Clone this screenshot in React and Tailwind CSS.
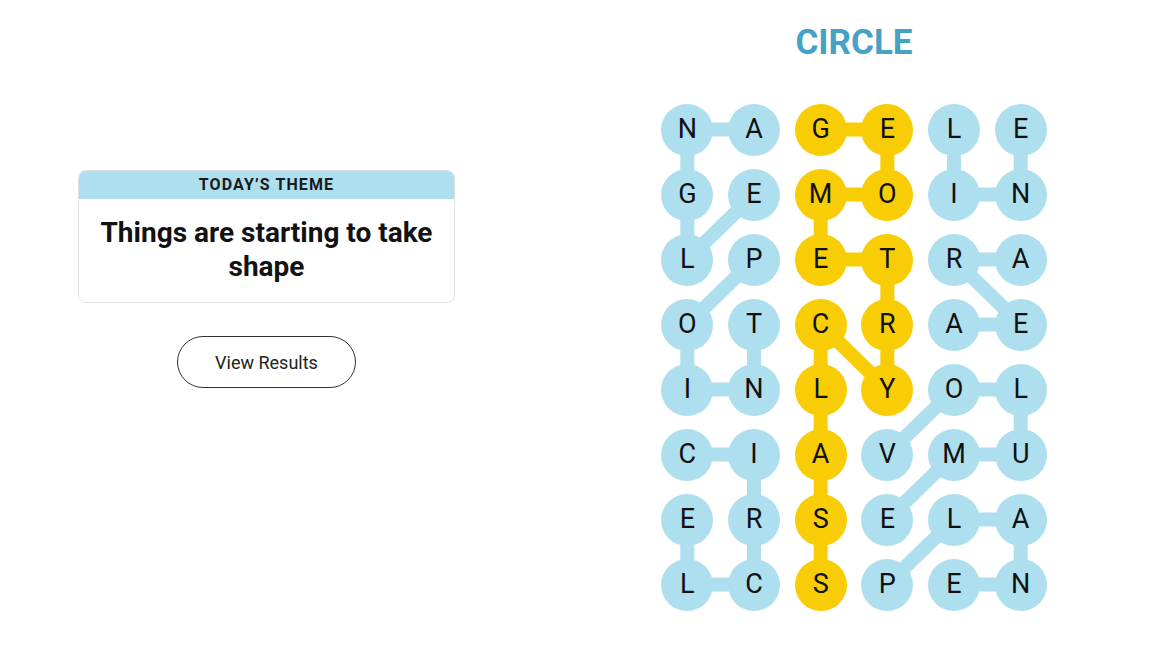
import React from "react";

const ROWS = [
  "NAGELE",
  "GEMOIN",
  "LPETRA",
  "OTCRAE",
  "INLYOL",
  "CIAVMU",
  "ERSELA",
  "LCSPEN",
];

// spangram cells [row, col]
const SPAN = [
  [0, 2], [0, 3], [1, 3], [1, 2], [2, 2], [2, 3], [3, 3], [4, 3],
  [3, 2], [4, 2], [5, 2], [6, 2], [7, 2],
];

const WORDS = [
  [[0, 1], [0, 0], [1, 0], [2, 0], [1, 1]], // ANGLE
  [[2, 1], [3, 0], [4, 0], [4, 1], [3, 1]], // POINT
  [[5, 0], [5, 1], [6, 1], [7, 1], [7, 0], [6, 0]], // CIRCLE
  [[0, 4], [1, 4], [1, 5], [0, 5]], // LINE
  [[2, 5], [2, 4], [3, 5], [3, 4]], // AREA
  [[5, 3], [4, 4], [4, 5], [5, 5], [5, 4], [6, 3]], // VOLUME
  [[7, 3], [6, 4], [6, 5], [7, 5], [7, 4]], // PLANE
];

const BLUE = "#aedfee";
const GOLD = "#f8cd05";

const cx = (c) => 33.33 + 66.67 * c;
const cy = (r) => 32.5 + 65 * r;

function Path({ cells, color }) {
  const pts = cells.map(([r, c]) => `${cx(c)},${cy(r)}`).join(" ");
  return (
    <polyline
      points={pts}
      fill="none"
      stroke={color}
      strokeWidth="14"
      strokeLinejoin="round"
      strokeLinecap="round"
    />
  );
}

const isSpan = (r, c) => SPAN.some(([a, b]) => a === r && b === c);

function Board() {
  return (
    <div className="relative w-[400px] h-[520px]">
      <svg className="absolute inset-0" width="400" height="520" viewBox="0 0 400 520">
        {WORDS.map((w, i) => (
          <Path key={i} cells={w} color={BLUE} />
        ))}
        <Path cells={SPAN} color={GOLD} />
      </svg>
      <div className="relative grid grid-cols-6">
        {ROWS.map((row, r) =>
          row.split("").map((ch, c) => (
            <div key={`${r}-${c}`} className="h-[65px] flex items-center justify-center">
              <div
                className={`w-[52px] h-[52px] rounded-full flex items-center justify-center text-[27px] text-[#111] ${
                  isSpan(r, c) ? "bg-[#f8cd05]" : "bg-[#aedfee]"
                }`}
              >
                {ch}
              </div>
            </div>
          ))
        )}
      </div>
    </div>
  );
}

export default function App() {
  return (
    <div
      className="flex w-[1152px] h-[648px] bg-white overflow-hidden"
      style={{ fontFamily: "Roboto, 'Liberation Sans', sans-serif" }}
    >
      {/* Theme panel */}
      <div className="w-[533px] flex flex-col items-center pt-[170px]">
        <div className="w-[377px] rounded-[8px] border border-[#e0e0e0] overflow-hidden">
          <div className="h-[28px] bg-[#aedfee] flex items-center justify-center text-[16px] font-bold tracking-[0.07em] text-[#1a1a1a]">
            TODAY’S THEME
          </div>
          <div className="bg-white pt-[17px] pb-[18px] px-4 text-center text-[28px] leading-[34px] font-bold text-[#121212]">
            Things are starting to take shape
          </div>
        </div>
        <button className="mt-[33px] w-[179px] h-[52px] rounded-full border border-[#333] text-[18px] text-[#222] bg-white">
          View Results
        </button>
      </div>

      {/* Board */}
      <div className="ml-[121px] w-[400px] flex flex-col items-center pt-[25px]">
        <div className="h-[35px] text-[35px] leading-none font-bold text-[#45a1c6]">CIRCLE</div>
        <div className="mt-[37px]">
          <Board />
        </div>
      </div>
    </div>
  );
}
